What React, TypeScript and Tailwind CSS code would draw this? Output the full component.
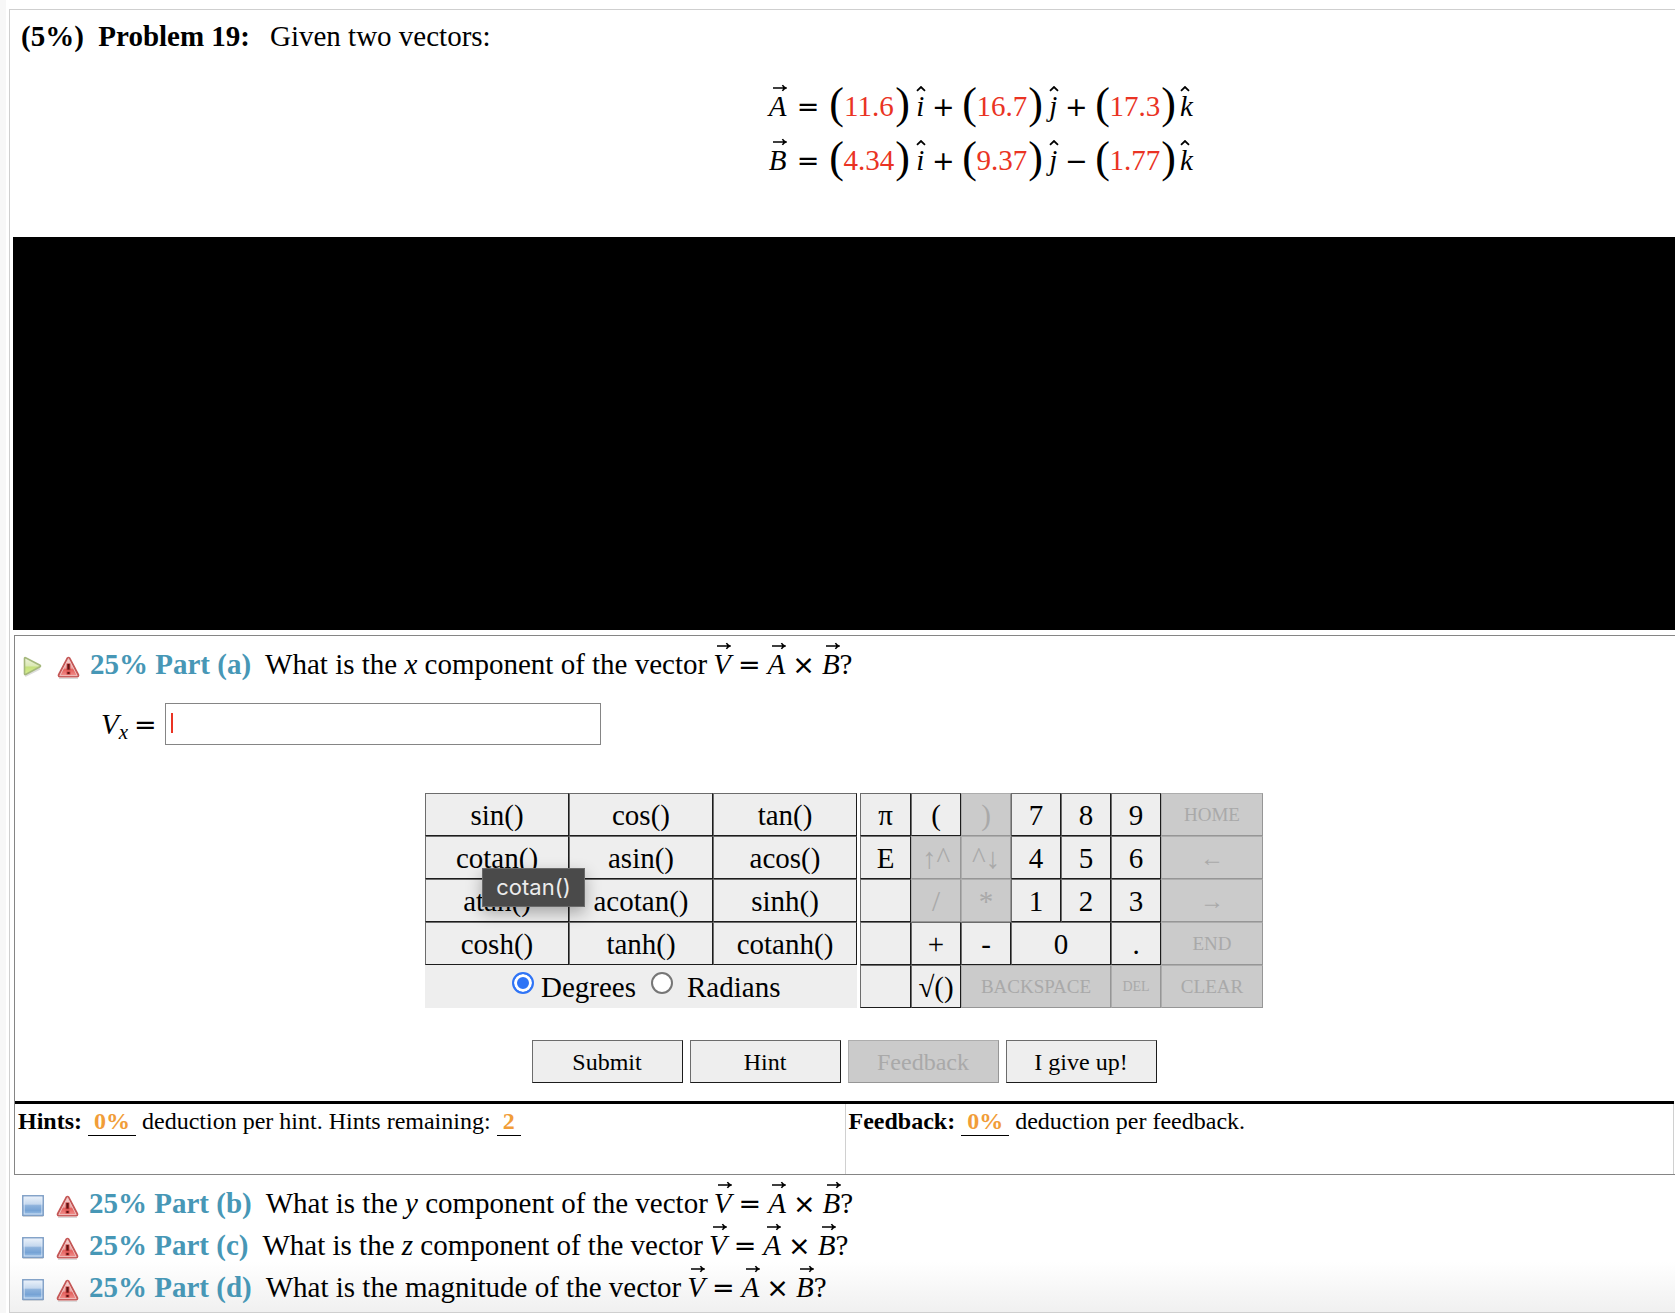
import clsx from 'clsx';
import { FC, ReactNode } from 'react';

const functions = [
  'sin()',
  'cos()',
  'tan()',
  'cotan()',
  'asin()',
  'acos()',
  'atan()',
  'acotan()',
  'sinh()',
  'cosh()',
  'tanh()',
  'cotanh()',
];

interface KeyDef {
  label: string;
  off?: boolean;
  className?: string;
}

const keys: KeyDef[] = [
  { label: 'π' },
  { label: '(' },
  { label: ')', off: true },
  { label: '7' },
  { label: '8' },
  { label: '9' },
  { label: 'HOME', off: true, className: 'text-[19px]' },
  { label: 'E' },
  { label: '↑^', off: true },
  { label: '^↓', off: true },
  { label: '4' },
  { label: '5' },
  { label: '6' },
  { label: '←', off: true, className: 'text-[24px]' },
  { label: '' },
  { label: '/', off: true },
  { label: '*', off: true },
  { label: '1' },
  { label: '2' },
  { label: '3' },
  { label: '→', off: true, className: 'text-[24px]' },
  { label: '' },
  { label: '+' },
  { label: '-' },
  { label: '0', className: 'col-span-2' },
  { label: '.' },
  { label: 'END', off: true, className: 'text-[19px]' },
  { label: '' },
  { label: '√()' },
  { label: 'BACKSPACE', off: true, className: 'col-span-3 text-[19px]' },
  { label: 'DEL', off: true, className: 'text-[14px]' },
  { label: 'CLEAR', off: true, className: 'text-[19px]' },
];

interface ButtonProps {
  children: ReactNode;
  off?: boolean;
  className?: string;
}

const Button: FC<ButtonProps> = ({ children, off, className }) => (
  <button
    type="button"
    disabled={off}
    className={clsx(
      'h-[43px] border whitespace-nowrap overflow-hidden',
      off
        ? 'bg-[#cbcbcb] text-[#a9a9a9] border-t-[#adadad] border-l-[#adadad] border-b-[#969696] border-r-[#969696]'
        : 'bg-[#eeeeee] text-black border-t-[#6c6c6c] border-l-[#6c6c6c] border-b-[#1c1c1c] border-r-[#1c1c1c]',
      className
    )}
  >
    {children}
  </button>
);

const Vec: FC<{ name: string }> = ({ name }) => (
  <i className="relative inline-block leading-[29px]">
    {name}
    <svg
      viewBox="0 0 14 8"
      className="absolute left-1 -top-2 w-[14px] h-2"
      fill="none"
      stroke="black"
      strokeWidth="1.5"
    >
      <path d="M0 4h12.5M9.4 1.2Q10.6 3.3 12.8 4Q10.6 4.7 9.4 6.8" />
    </svg>
  </i>
);

const Hat: FC<{ name: string }> = ({ name }) => (
  <span className="w-5 text-center">
    <i className="relative inline-block leading-[29px]">
      {name}
      <svg
        viewBox="0 0 10 6"
        className="absolute left-0 -top-1.5 w-[10px] h-1.5"
        fill="none"
        stroke="black"
        strokeWidth="1.8"
      >
        <path d="M1 4.8L5 1L9 4.8" />
      </svg>
    </i>
  </span>
);

const mathSign = "font-['DejaVu_Sans',sans-serif] text-[27px] leading-none";

const Term: FC<{ value: string; unit: string }> = ({ value, unit }) => (
  <>
    <span className="self-start w-[13px] text-[44px] leading-[38px]">(</span>
    <span className="w-[53px] text-center text-[#ea3323]">{value}</span>
    <span className="self-start w-[15px] text-[44px] leading-[38px]">)</span>
    <Hat name={unit} />
  </>
);

const Sign: FC<{ children: ReactNode }> = ({ children }) => (
  <span className={clsx(mathSign, 'w-[26px] mr-1.5 text-center')}>
    {children}
  </span>
);

const Equation: FC<{ name: string; values: string[]; last: string }> = ({
  name,
  values,
  last,
}) => (
  <div className="flex items-baseline h-[54px]">
    <span className="w-[18px]">
      <Vec name={name} />
    </span>
    <span className={clsx(mathSign, 'mx-2.5')}>=</span>
    <Term value={values[0]} unit="i" />
    <Sign>+</Sign>
    <Term value={values[1]} unit="j" />
    <Sign>{last}</Sign>
    <Term value={values[2]} unit="k" />
  </div>
);

const PlayIcon = () => (
  <svg viewBox="0 0 22 22" className="w-[22px] h-[22px]">
    <defs>
      <linearGradient id="play" x1="0" y1="0" x2="0" y2="1">
        <stop offset="0" stopColor="#eef3dc" />
        <stop offset="0.5" stopColor="#dbe9b4" />
        <stop offset="0.55" stopColor="#c4e07c" />
        <stop offset="1" stopColor="#d8f08f" />
      </linearGradient>
    </defs>
    <path d="M2 20L17 12.5" stroke="#dddddd" strokeWidth="2" />
    <path
      d="M1.5 2.2Q1.5 1.3 2.6 1.7L17 9.2Q18 10 17 10.8L2.6 18.4Q1.5 18.8 1.5 17.8Z"
      fill="url(#play)"
      stroke="#a5b87c"
      strokeWidth="1.6"
    />
  </svg>
);

const StopIcon = () => (
  <svg viewBox="0 0 22 22" className="w-[22px] h-[22px]">
    <defs>
      <linearGradient id="stop" x1="0" y1="0" x2="0" y2="1">
        <stop offset="0" stopColor="#eef4fb" />
        <stop offset="0.42" stopColor="#c5d8ee" />
        <stop offset="0.5" stopColor="#8db2dc" />
        <stop offset="0.75" stopColor="#76a3d5" />
        <stop offset="1" stopColor="#a3c6ea" />
      </linearGradient>
    </defs>
    <path d="M1 21.5h20" stroke="#d9d9d9" />
    <rect
      x="0.8"
      y="0.8"
      width="20.4"
      height="19.6"
      fill="url(#stop)"
      stroke="#7f9fc6"
      strokeWidth="1.5"
    />
    <rect
      x="2.2"
      y="2.2"
      width="17.6"
      height="16.8"
      fill="none"
      stroke="#e3edf8"
      strokeOpacity="0.7"
    />
  </svg>
);

const WarningIcon = () => (
  <svg viewBox="0 0 23 23" className="w-[23px] h-[23px]">
    <defs>
      <linearGradient id="warn" x1="0" y1="0" x2="0" y2="1">
        <stop offset="0" stopColor="#f6dede" />
        <stop offset="0.55" stopColor="#eda3a1" />
        <stop offset="0.65" stopColor="#e45f5c" />
        <stop offset="1" stopColor="#f08e8b" />
      </linearGradient>
    </defs>
    <path d="M2 22.4h19" stroke="#d5d5d5" />
    <path
      d="M9.6 1.8Q11.5 -0.2 13.4 1.8L22.2 18.6Q22.7 21.2 20.4 21.6H2.6Q0.3 21.2 0.8 18.6Z"
      fill="#c45655"
    />
    <path
      d="M11.5 2.6L20.2 19.6H2.8Z"
      fill="url(#warn)"
      stroke="#efc0bf"
      strokeWidth="1"
    />
    <path d="M9.6 7.4h3.8v6.8h-3.8zM9.6 15.6h3.8v2.8h-3.8z" fill="#c23a39" />
    <path d="M10.5 8h2v5.6h-2zM10.5 16h2v2h-2z" fill="#5c1414" />
  </svg>
);

interface PartProps {
  letter: string;
  icon: ReactNode;
  className?: string;
  children: ReactNode;
}

const Part: FC<PartProps> = ({ letter, icon, className, children }) => (
  <div
    className={clsx('flex items-center h-[42px] whitespace-nowrap', className)}
  >
    <span className="mr-3 mt-1.5">{icon}</span>
    <span className="mr-2.5 mt-1.5">
      <WarningIcon />
    </span>
    <b className="mr-3.5 text-[#4797b6]">25% Part ({letter})</b>
    <div className="flex items-baseline leading-[42px]">
      <span className="mr-1.5">{children}</span>
      <Vec name="V" />
      <span className={clsx(mathSign, 'mx-[7px]')}>=</span>
      <Vec name="A" />
      <span className={clsx(mathSign, 'mx-[7px]')}>×</span>
      <Vec name="B" />
      <span>?</span>
    </div>
  </div>
);

const Amount: FC<{ children: ReactNode }> = ({ children }) => (
  <b className="inline-block px-1.5 leading-7 border-b border-black text-[#f19d38]">
    {children}
  </b>
);

const radioClass =
  'appearance-none w-[22px] h-[22px] mb-2 rounded-full border-2 border-[#767676] bg-white checked:border-[#2f74f6] checked:bg-[#2f74f6] checked:shadow-[inset_0_0_0_3px_white]';

const App: FC = () => (
  <main className="flex min-h-screen bg-white text-black font-['Liberation_Serif',serif] text-[29px] leading-[42px] overflow-hidden">
    <div className="w-1.5 shrink-0 bg-[#f7f7f7]" />

    <div className="grow min-w-0 ml-[3px] mt-[9px] border-l border-t border-b border-[#cfcfcf] bg-[linear-gradient(to_top,#f0f0f0,#ffffff_50px)]">
      <section className="flex pt-[5px] pl-[11px] pb-[44px]">
        <h1 className="font-bold whitespace-pre">{'(5%)  Problem 19:'}</h1>
        <div className="grow pl-5">
          <p>Given two vectors:</p>
          <div className="flex flex-col items-center mt-7 pl-5">
            <Equation name="A" values={['11.6', '16.7', '17.3']} last="+" />
            <Equation name="B" values={['4.34', '9.37', '1.77']} last="−" />
          </div>
        </div>
      </section>

      <div className="h-[393px] ml-[3px] bg-black" />

      <section className="mt-[5px] ml-1 border-l border-t border-b border-[#858585]">
        <Part letter="a" icon={<PlayIcon />} className="mt-[7px] pl-2">
          What is the <i>x</i> component of the vector
        </Part>

        <div className="flex items-center mt-[18px] pl-[86px]">
          <label
            htmlFor="answer"
            className="flex items-baseline h-[42px] whitespace-nowrap"
          >
            <i>
              V<sub className="text-[21px]">x</sub>
            </i>
            <span className={clsx(mathSign, 'ml-1.5 mr-2')}>=</span>
          </label>
          <div className="relative">
            <input
              id="answer"
              type="text"
              className="block w-[436px] h-[42px] px-1.5 border border-[#858585] bg-white text-[#ea3323] caret-transparent outline-none"
            />
            <span className="absolute left-1.5 top-2.5 w-0.5 h-5 bg-[#ea3323] pointer-events-none" />
          </div>
        </div>

        <div className="flex justify-center items-start mt-12 pr-0.5 gap-[3px]">
          <div className="relative w-[432px] bg-[#eeeeee]">
            <div className="grid grid-cols-3">
              {functions.map((name) => (
                <Button key={name}>{name}</Button>
              ))}
            </div>
            <div className="flex items-center h-[43px] pl-[87px]">
              <input
                id="degrees"
                type="radio"
                name="angle"
                defaultChecked
                className={radioClass}
              />
              <label htmlFor="degrees" className="ml-[7px] mr-[15px]">
                Degrees
              </label>
              <input
                id="radians"
                type="radio"
                name="angle"
                className={radioClass}
              />
              <label htmlFor="radians" className="ml-3.5">
                Radians
              </label>
            </div>
            <div
              role="tooltip"
              className="absolute left-[57px] top-[75px] flex items-center justify-center w-[103px] h-[39px] pb-0.5 bg-[#4a4a4a] border border-[#6a6a6a] text-[#ececec] font-['Inter',sans-serif] text-[22px] leading-none shadow-[0_6px_16px_rgba(0,0,0,0.3)]"
            >
              cotan()
            </div>
          </div>

          <div className="grid grid-cols-[51px_repeat(5,50px)_102px]">
            {keys.map(({ label, off, className }, index) => (
              <Button key={index} off={off} className={className}>
                {label}
              </Button>
            ))}
          </div>
        </div>

        <div className="flex justify-center mt-8 mb-[18px] pr-0.5 gap-[7px] text-[24px]">
          <Button className="w-[151px]">Submit</Button>
          <Button className="w-[151px]">Hint</Button>
          <Button off className="w-[151px]">
            Feedback
          </Button>
          <Button className="w-[151px]">I give up!</Button>
        </div>

        <div className="grid grid-cols-2 h-[73px] mr-px border-t-[3px] border-black text-[24px] leading-7 whitespace-nowrap">
          <div className="pt-[3px] pl-[3px]">
            <b>Hints:</b> <Amount>0%</Amount> deduction per hint. Hints
            remaining: <Amount>2</Amount>
          </div>
          <div className="pt-[3px] pl-[3px] border-l border-r border-[#d0d0d0]">
            <b>Feedback:</b> <Amount>0%</Amount> deduction per feedback.
          </div>
        </div>
      </section>

      <section className="pt-[7px] pb-1 pl-3">
        <Part letter="b" icon={<StopIcon />}>
          What is the <i>y</i> component of the vector
        </Part>
        <Part letter="c" icon={<StopIcon />}>
          What is the <i>z</i> component of the vector
        </Part>
        <Part letter="d" icon={<StopIcon />}>
          What is the magnitude of the vector
        </Part>
      </section>
    </div>
  </main>
);

export default App;
